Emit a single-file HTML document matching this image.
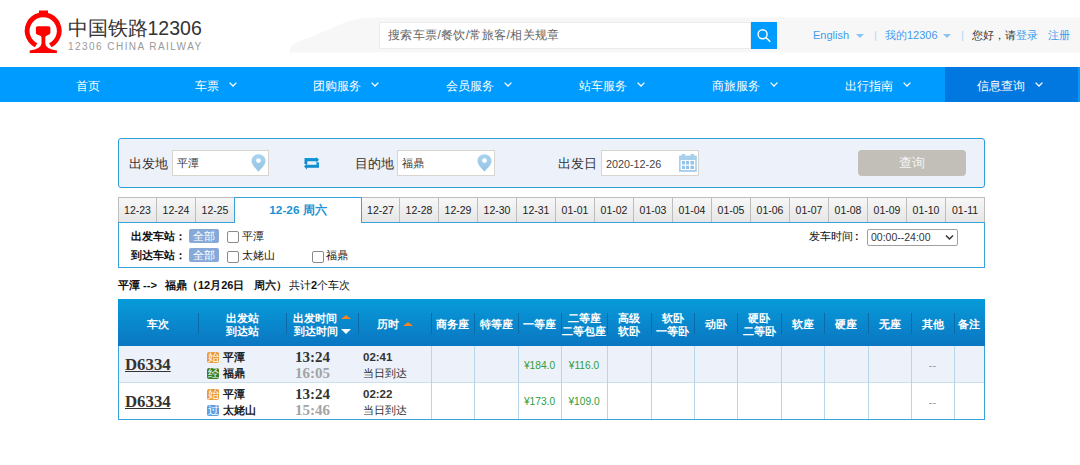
<!DOCTYPE html>
<html><head><meta charset="utf-8">
<style>
*{margin:0;padding:0;box-sizing:border-box}
html,body{width:1080px;height:465px;overflow:hidden;background:#fff;font-family:"Liberation Sans",sans-serif;color:#333}
.abs{position:absolute}
#hdr{position:absolute;left:0;top:0;width:1080px;height:67px;background:#fff}
#nav{position:absolute;left:0;top:67px;width:1080px;height:35px;background:#009bfe}
#nav .it{position:absolute;top:1.5px;height:35px;line-height:35px;font-size:12.2px;color:#fff;white-space:nowrap}
#nav .chev{display:inline-block;width:8px;height:5px;margin-left:10px;position:relative;top:-3px;background:none}
#nav .sel{position:absolute;left:945px;top:0;width:133px;height:35px;background:#0078e0}
.tl{font-size:11px;color:#3f9bf0}
.lbl{font-size:12.6px;line-height:19px;color:#333;white-space:nowrap}
.inp{top:150px;height:26px;background:#fff;border:1px solid #d8d5cf}
.ival{font-size:11px;line-height:15px;color:#333;white-space:nowrap}
.tab{top:197px;height:25px;border:1px solid #bdbdbd;border-bottom:none;background:linear-gradient(#f7f7f7,#e6e6e6);font-size:10.5px;line-height:24px;text-align:center;color:#222}
.flt{font-size:11px;line-height:15px;color:#111;white-space:nowrap}
.badge{width:30px;height:14px;background:#86a9d8;border-radius:2px;color:#fff;font-size:11px;line-height:14px;text-align:center}
.cb{width:12px;height:12px;border:1px solid #8a8a8a;border-radius:2px;background:#fff}
.th{top:302px;height:46px;display:flex;align-items:center;justify-content:center;text-align:center;color:#fff;font-weight:bold;font-size:11.3px;line-height:13.3px;white-space:nowrap}
.up{display:inline-block;width:0;height:0;border-left:5px solid transparent;border-right:5px solid transparent;border-bottom:4.5px solid #f7841e;margin-left:4px;vertical-align:2.5px}
.dn{display:inline-block;width:0;height:0;border-left:5px solid transparent;border-right:5px solid transparent;border-top:5px solid #fff;margin-left:3px;vertical-align:1px}
.tno{font-family:"Liberation Serif",serif;font-weight:bold;font-size:16.8px;line-height:18px;color:#333;text-decoration:underline}
.sb{width:12px;height:11px;color:#fff;font-size:10.5px;line-height:11px;text-align:center;border-radius:2px}
.sn{font-size:11px;font-weight:bold;line-height:15px;color:#222;white-space:nowrap}
.tm{font-family:"Liberation Serif",serif;font-weight:bold;font-size:15px;line-height:16px;color:#333}
.dur{font-size:11.5px;font-weight:bold;line-height:15px;color:#333}
.arr{font-size:10.5px;line-height:15px;color:#333;white-space:nowrap}
.pr{font-size:10.2px;line-height:15px;color:#2e9e3e;text-align:center}
.info{top:277.5px;font-size:11px;line-height:15px;color:#111;white-space:nowrap}
</style></head><body>
<div id="hdr">
  <svg class="abs" style="left:0;top:0" width="1080" height="67">
    <path d="M290 52.5 L290 49.5 C290.5 46 293 44 300 41.3 L327 30.3 C340 24.5 352 17.8 373 17.5 L1080 17.5 L1080 52.5 Z" fill="#f7f7f7"/>
    <g fill="#f00">
      <path d="M39 10.5 H48 V14.5 H39 Z"/>
      <path d="M34.8 47.2 A18.5 18.5 0 1 1 51.6 47.2 L49 43.3 A13.7 13.7 0 1 0 37.4 43.3 Z"/>
      <path d="M37.6 26.3 H48.7 Q50.4 26.3 50.4 28 V32.8 Q50.4 34.8 47.5 35.2 Q45.3 35.6 45.3 37.5 V43.5 Q45.6 49 56.9 50.5 V53 H29.7 V50.5 Q41 49 41.5 43.5 V37.5 Q41.5 35.6 39 35.2 Q35.9 34.8 35.9 32.8 V28 Q35.9 26.3 37.6 26.3 Z"/>
    </g>
  </svg>
  <div class="abs" style="left:67.5px;top:14.5px;font-size:19.5px;line-height:26px;color:#333;white-space:nowrap">中国铁路12306</div>
  <div class="abs" style="left:68px;top:41px;font-size:10px;line-height:12px;color:#999;letter-spacing:1.45px;white-space:nowrap">12306 CHINA RAILWAY</div>
  <div class="abs" style="left:379px;top:22px;width:372px;height:27px;background:#fff;border:1px solid #ececec"></div>
  <div class="abs" style="left:388px;top:27px;font-size:12px;line-height:17px;color:#666;letter-spacing:0.35px;white-space:nowrap">搜索车票/餐饮/常旅客/相关规章</div>
  <div class="abs" style="left:751px;top:22px;width:26px;height:27px;background:#009bfe"></div>
  <svg class="abs" style="left:751px;top:22px" width="26" height="27">
    <circle cx="11.6" cy="12.2" r="4.5" fill="none" stroke="#fff" stroke-width="1.4"/>
    <path d="M14.9 15.5 L18.8 19.3" stroke="#fff" stroke-width="1.6" stroke-linecap="round"/>
  </svg>
  <div class="abs tl" style="left:813px;top:27px;line-height:17px;white-space:nowrap">English</div>
  <div class="abs" style="left:856px;top:34px;width:0;height:0;border-left:4px solid transparent;border-right:4px solid transparent;border-top:4px solid #8cc3f5"></div>
  <div class="abs tl" style="left:874px;top:27px;line-height:17px;color:#b3d7f7">|</div>
  <div class="abs tl" style="left:885px;top:27px;line-height:17px;white-space:nowrap">我的12306</div>
  <div class="abs" style="left:943px;top:34px;width:0;height:0;border-left:4px solid transparent;border-right:4px solid transparent;border-top:4px solid #8cc3f5"></div>
  <div class="abs tl" style="left:961px;top:27px;line-height:17px;color:#b3d7f7">|</div>
  <div class="abs" style="left:972px;top:27px;font-size:11px;line-height:17px;color:#333;white-space:nowrap">您好，请<span style="color:#3f9bf0">登录</span></div>
  <div class="abs tl" style="left:1047.5px;top:27px;line-height:17px;white-space:nowrap">注册</div>
</div>

<div id="nav">
  <div class="sel"></div>
  <div class="it" style="left:76px">首页</div>
  <div class="it" style="left:195px">车票<svg class="chev" width="8" height="5" viewBox="0 0 8 5"><path d="M0.6 0.6 L4 4 L7.4 0.6" fill="none" stroke="#fff" stroke-width="1.3"/></svg></div>
  <div class="it" style="left:313px">团购服务<svg class="chev" width="8" height="5" viewBox="0 0 8 5"><path d="M0.6 0.6 L4 4 L7.4 0.6" fill="none" stroke="#fff" stroke-width="1.3"/></svg></div>
  <div class="it" style="left:446px">会员服务<svg class="chev" width="8" height="5" viewBox="0 0 8 5"><path d="M0.6 0.6 L4 4 L7.4 0.6" fill="none" stroke="#fff" stroke-width="1.3"/></svg></div>
  <div class="it" style="left:579px">站车服务<svg class="chev" width="8" height="5" viewBox="0 0 8 5"><path d="M0.6 0.6 L4 4 L7.4 0.6" fill="none" stroke="#fff" stroke-width="1.3"/></svg></div>
  <div class="it" style="left:712px">商旅服务<svg class="chev" width="8" height="5" viewBox="0 0 8 5"><path d="M0.6 0.6 L4 4 L7.4 0.6" fill="none" stroke="#fff" stroke-width="1.3"/></svg></div>
  <div class="it" style="left:845px">出行指南<svg class="chev" width="8" height="5" viewBox="0 0 8 5"><path d="M0.6 0.6 L4 4 L7.4 0.6" fill="none" stroke="#fff" stroke-width="1.3"/></svg></div>
  <div class="it" style="left:977px">信息查询<svg class="chev" width="8" height="5" viewBox="0 0 8 5"><path d="M0.6 0.6 L4 4 L7.4 0.6" fill="none" stroke="#fff" stroke-width="1.3"/></svg></div>
</div>


<!-- search form -->
<div class="abs" style="left:118px;top:138px;width:867px;height:50px;background:#edf1f9;border:1px solid #2f9fd8;border-radius:3px"></div>
<div class="abs lbl" style="left:129px;top:155px">出发地</div>
<div class="abs inp" style="left:172px;top:150px;width:97px"></div>
<div class="abs ival" style="left:177px;top:156px">平潭</div>
<svg class="abs" style="left:251px;top:154px" width="15" height="18" viewBox="0 0 15 18"><defs><linearGradient id="pg" x1="0" y1="0" x2="0" y2="1"><stop offset="0" stop-color="#a9d3ee"/><stop offset="1" stop-color="#95c4e6"/></linearGradient></defs><path d="M7.5 0.3 C3.4 0.3 0.5 3.3 0.5 7 C0.5 11 5 14.5 7.5 17.8 C10 14.5 14.5 11 14.5 7 C14.5 3.3 11.6 0.3 7.5 0.3 Z" fill="url(#pg)"/><circle cx="7.5" cy="6.6" r="2.4" fill="#fff"/></svg>
<svg class="abs" style="left:298px;top:152px" width="28" height="24" viewBox="0 0 28 24"><defs><linearGradient id="sg" x1="0" y1="0" x2="0" y2="1"><stop offset="0" stop-color="#16a0dc"/><stop offset="1" stop-color="#0b7fc0"/></linearGradient></defs><g fill="url(#sg)"><path d="M6.5 6.1 H18.3 V4.9 L21 7.7 L18.3 10.6 V9.3 H9.3 V11.9 H6.5 Z"/><path d="M21 15.8 H8.8 V17.8 L6.1 14.3 L8.8 11.2 V12.7 H18.4 V10.2 H21 Z"/></g></svg>
<div class="abs lbl" style="left:355px;top:155px">目的地</div>
<div class="abs inp" style="left:397px;top:150px;width:98px"></div>
<div class="abs ival" style="left:402px;top:156px">福鼎</div>
<svg class="abs" style="left:477px;top:154px" width="15" height="18" viewBox="0 0 15 18"><path d="M7.5 0.3 C3.4 0.3 0.5 3.3 0.5 7 C0.5 11 5 14.5 7.5 17.8 C10 14.5 14.5 11 14.5 7 C14.5 3.3 11.6 0.3 7.5 0.3 Z" fill="url(#pg)"/><circle cx="7.5" cy="6.6" r="2.4" fill="#fff"/></svg>
<div class="abs lbl" style="left:558px;top:155px">出发日</div>
<div class="abs inp" style="left:601px;top:150px;width:98px"></div>
<div class="abs" style="left:606px;top:156.5px;font-size:10.8px;line-height:15px;color:#444">2020-12-26</div>
<svg class="abs" style="left:679px;top:154px" width="18" height="18" viewBox="0 0 18 18"><g fill="#a6d0ec"><rect x="0" y="1.6" width="17.8" height="16.3"/><rect x="2.7" y="0" width="3.3" height="2.5"/><rect x="11.6" y="0" width="3.4" height="2.5"/></g><rect x="1.7" y="6" width="14.5" height="10" fill="#fff"/><g fill="#93c4e6"><rect x="3" y="6.9" width="2.9" height="3.6"/><rect x="6.9" y="6.9" width="3.2" height="3.6"/><rect x="11.5" y="6.9" width="3.4" height="3.6"/><rect x="3" y="11.7" width="2.9" height="3.3"/><rect x="6.9" y="11.7" width="3.2" height="3.3"/><rect x="11.5" y="11.7" width="3.4" height="3.3"/></g></svg>
<div class="abs" style="left:858px;top:150px;width:108px;height:26px;background:#c1bfb8;border-radius:4px;color:#f4f4f4;font-size:13px;line-height:26px;text-align:center">查询</div>
<!-- tabs -->
<div class="abs" style="left:118px;top:222px;width:867px;height:46px;border:1px solid #3aa3dc;background:#fff"></div>
<div class="abs tab" style="left:118px;width:39px">12-23</div>
<div class="abs tab" style="left:156px;width:40px">12-24</div>
<div class="abs tab" style="left:195px;width:40px">12-25</div>
<div class="abs tab" style="left:361px;width:39px">12-27</div>
<div class="abs tab" style="left:399px;width:40px">12-28</div>
<div class="abs tab" style="left:438px;width:40px">12-29</div>
<div class="abs tab" style="left:477px;width:40px">12-30</div>
<div class="abs tab" style="left:516px;width:40px">12-31</div>
<div class="abs tab" style="left:555px;width:40px">01-01</div>
<div class="abs tab" style="left:594px;width:40px">01-02</div>
<div class="abs tab" style="left:633px;width:40px">01-03</div>
<div class="abs tab" style="left:672px;width:40px">01-04</div>
<div class="abs tab" style="left:711px;width:40px">01-05</div>
<div class="abs tab" style="left:750px;width:40px">01-06</div>
<div class="abs tab" style="left:789px;width:40px">01-07</div>
<div class="abs tab" style="left:828px;width:40px">01-08</div>
<div class="abs tab" style="left:867px;width:40px">01-09</div>
<div class="abs tab" style="left:906px;width:40px">01-10</div>
<div class="abs tab" style="left:945px;width:40px">01-11</div>
<div class="abs" style="left:234px;top:197px;width:128px;height:26px;background:#fff;border:1px solid #3aa3dc;border-bottom:none;font-size:11.8px;font-weight:bold;color:#1b93d5;line-height:25px;text-align:center">12-26 周六</div>

<!-- station filter -->
<div class="abs flt" style="left:131px;top:229px;font-weight:bold">出发车站：</div>
<div class="abs badge" style="left:189px;top:229px">全部</div>
<div class="abs cb" style="left:227px;top:231px"></div>
<div class="abs flt" style="left:242px;top:229px">平潭</div>
<div class="abs flt" style="left:131px;top:248px;font-weight:bold">到达车站：</div>
<div class="abs badge" style="left:189px;top:248px">全部</div>
<div class="abs cb" style="left:227px;top:251px"></div>
<div class="abs flt" style="left:242px;top:248px">太姥山</div>
<div class="abs cb" style="left:312px;top:251px"></div>
<div class="abs flt" style="left:326px;top:248px">福鼎</div>
<div class="abs flt" style="left:809px;top:229px;font-size:10.5px">发车时间<span style="margin-left:2px;font-weight:bold">:</span></div>
<div class="abs" style="left:867px;top:229px;width:91px;height:17px;border:1px solid #a0a0a0;border-radius:2px;background:#fff;font-size:10.5px;line-height:15px;padding-left:3px;color:#333">00:00--24:00</div>
<svg class="abs" style="left:945px;top:234px" width="9" height="7" viewBox="0 0 9 7"><path d="M1 1.5 L4.5 5 L8 1.5" fill="none" stroke="#333" stroke-width="1.5"/></svg>

<!-- info -->
<div class="abs info" style="left:118px;font-weight:bold">平潭 --&gt;</div>
<div class="abs info" style="left:165px;font-weight:bold">福鼎</div>
<div class="abs info" style="left:187px;font-weight:bold">（12月26日</div>
<div class="abs info" style="left:254px;font-weight:bold">周六）</div>
<div class="abs info" style="left:289px">共计<b>2</b>个车次</div>
<!-- table -->
<div class="abs" style="left:118px;top:299px;width:867px;height:47px;background:linear-gradient(#079bd9,#0a76c2)"></div>
<div class="abs" style="left:198px;top:313px;width:1px;height:21px;background:#0b6aa8"></div>
<div class="abs" style="left:286px;top:313px;width:1px;height:21px;background:#0b6aa8"></div>
<div class="abs" style="left:358px;top:313px;width:1px;height:21px;background:#0b6aa8"></div>
<div class="abs" style="left:431px;top:313px;width:1px;height:21px;background:#0b6aa8"></div>
<div class="abs" style="left:474px;top:313px;width:1px;height:21px;background:#0b6aa8"></div>
<div class="abs" style="left:518px;top:313px;width:1px;height:21px;background:#0b6aa8"></div>
<div class="abs" style="left:561px;top:313px;width:1px;height:21px;background:#0b6aa8"></div>
<div class="abs" style="left:607px;top:313px;width:1px;height:21px;background:#0b6aa8"></div>
<div class="abs" style="left:651px;top:313px;width:1px;height:21px;background:#0b6aa8"></div>
<div class="abs" style="left:694px;top:313px;width:1px;height:21px;background:#0b6aa8"></div>
<div class="abs" style="left:737px;top:313px;width:1px;height:21px;background:#0b6aa8"></div>
<div class="abs" style="left:781px;top:313px;width:1px;height:21px;background:#0b6aa8"></div>
<div class="abs" style="left:824px;top:313px;width:1px;height:21px;background:#0b6aa8"></div>
<div class="abs" style="left:868px;top:313px;width:1px;height:21px;background:#0b6aa8"></div>
<div class="abs" style="left:911px;top:313px;width:1px;height:21px;background:#0b6aa8"></div>
<div class="abs" style="left:954px;top:313px;width:1px;height:21px;background:#0b6aa8"></div>
<div class="abs th" style="left:118px;width:80px"><div>车次</div></div>
<div class="abs th" style="left:198px;width:88px"><div>出发站<br>到达站</div></div>
<div class="abs th" style="left:286px;width:72px"><div>出发时间<span class="up"></span><br>到达时间<span class="dn"></span></div></div>
<div class="abs th" style="left:358px;width:73px"><div>历时<span class="up"></span></div></div>
<div class="abs th" style="left:431px;width:43px"><div>商务座</div></div>
<div class="abs th" style="left:474px;width:44px"><div>特等座</div></div>
<div class="abs th" style="left:518px;width:43px"><div>一等座</div></div>
<div class="abs th" style="left:561px;width:46px"><div>二等座<br>二等包座</div></div>
<div class="abs th" style="left:607px;width:44px"><div>高级<br>软卧</div></div>
<div class="abs th" style="left:651px;width:43px"><div>软卧<br>一等卧</div></div>
<div class="abs th" style="left:694px;width:43px"><div>动卧</div></div>
<div class="abs th" style="left:737px;width:44px"><div>硬卧<br>二等卧</div></div>
<div class="abs th" style="left:781px;width:43px"><div>软座</div></div>
<div class="abs th" style="left:824px;width:44px"><div>硬座</div></div>
<div class="abs th" style="left:868px;width:43px"><div>无座</div></div>
<div class="abs th" style="left:911px;width:43px"><div>其他</div></div>
<div class="abs th" style="left:954px;width:30px"><div>备注</div></div>
<div class="abs" style="left:118px;top:346px;width:867px;height:74px;border:1px solid #3aa3dc;border-top:none;background:#fff"></div>
<div class="abs" style="left:119px;top:346px;width:865px;height:36px;background:#edf1f9"></div>
<div class="abs" style="left:119px;top:382px;width:865px;height:1px;background:#c9e0ee"></div>
<div class="abs" style="left:431px;top:346px;width:1px;height:73px;background:#b9d6e8"></div>
<div class="abs" style="left:474px;top:346px;width:1px;height:73px;background:#b9d6e8"></div>
<div class="abs" style="left:518px;top:346px;width:1px;height:73px;background:#b9d6e8"></div>
<div class="abs" style="left:561px;top:346px;width:1px;height:73px;background:#b9d6e8"></div>
<div class="abs" style="left:607px;top:346px;width:1px;height:73px;background:#b9d6e8"></div>
<div class="abs" style="left:651px;top:346px;width:1px;height:73px;background:#b9d6e8"></div>
<div class="abs" style="left:694px;top:346px;width:1px;height:73px;background:#b9d6e8"></div>
<div class="abs" style="left:737px;top:346px;width:1px;height:73px;background:#b9d6e8"></div>
<div class="abs" style="left:781px;top:346px;width:1px;height:73px;background:#b9d6e8"></div>
<div class="abs" style="left:824px;top:346px;width:1px;height:73px;background:#b9d6e8"></div>
<div class="abs" style="left:868px;top:346px;width:1px;height:73px;background:#b9d6e8"></div>
<div class="abs" style="left:911px;top:346px;width:1px;height:73px;background:#b9d6e8"></div>
<div class="abs" style="left:954px;top:346px;width:1px;height:73px;background:#b9d6e8"></div>
<div class="abs tno" style="left:125px;top:356px">D6334</div>
<div class="abs sb" style="left:207px;top:352px;background:#e99b3c">始</div>
<div class="abs sn" style="left:223px;top:350px">平潭</div>
<div class="abs sb" style="left:207px;top:368px;background:#3b7d22">经</div>
<div class="abs sn" style="left:223px;top:366px">福鼎</div>
<div class="abs tm" style="left:295px;top:349px">13:24</div>
<div class="abs tm" style="left:295px;top:365px;color:#a3a3a3">16:05</div>
<div class="abs dur" style="left:363px;top:350px">02:41</div>
<div class="abs arr" style="left:363px;top:366px">当日到达</div>
<div class="abs pr" style="left:518px;width:43px;top:358px">¥184.0</div>
<div class="abs pr" style="left:561px;width:46px;top:358px">¥116.0</div>
<div class="abs" style="left:911px;width:43px;top:358px;text-align:center;font-size:11px;line-height:15px;color:#999">--</div>
<div class="abs tno" style="left:125px;top:393px">D6334</div>
<div class="abs sb" style="left:207px;top:389px;background:#e99b3c">始</div>
<div class="abs sn" style="left:223px;top:387px">平潭</div>
<div class="abs sb" style="left:207px;top:405px;background:#5a9fe3">过</div>
<div class="abs sn" style="left:223px;top:403px">太姥山</div>
<div class="abs tm" style="left:295px;top:386px">13:24</div>
<div class="abs tm" style="left:295px;top:402px;color:#a3a3a3">15:46</div>
<div class="abs dur" style="left:363px;top:387px">02:22</div>
<div class="abs arr" style="left:363px;top:403px">当日到达</div>
<div class="abs pr" style="left:518px;width:43px;top:394px">¥173.0</div>
<div class="abs pr" style="left:561px;width:46px;top:394px">¥109.0</div>
<div class="abs" style="left:911px;width:43px;top:395px;text-align:center;font-size:11px;line-height:15px;color:#999">--</div>
</body></html>
